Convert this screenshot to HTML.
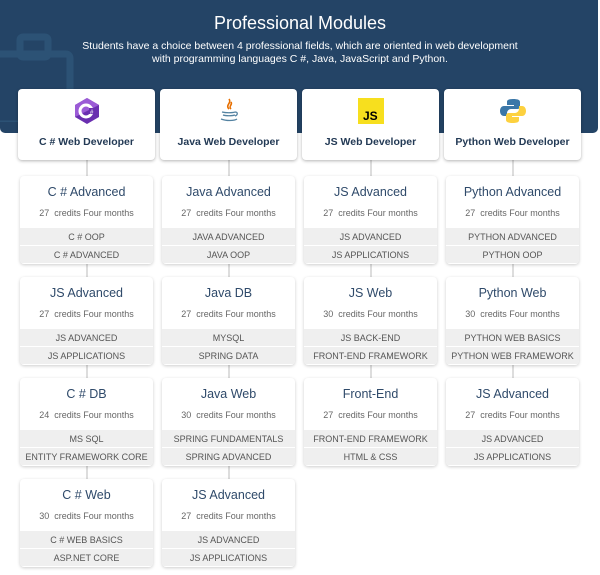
<!DOCTYPE html>
<html><head><meta charset="utf-8"><style>
*{margin:0;padding:0;box-sizing:border-box}
body{width:600px;height:575px;background:#fff;font-family:"Liberation Sans",sans-serif;position:relative;overflow:hidden}
.ban{position:absolute;left:0;top:0;width:598px;height:133px;background:#244466;border-radius:0 0 5px 5px}
.ban h1{position:absolute;top:13px;left:0;width:600px;text-align:center;color:#fff;font-weight:normal;font-size:18px}
.ban p{position:absolute;top:40px;left:0;width:600px;text-align:center;color:#fff;font-size:10.5px;line-height:13px}
.hc{position:absolute;top:89px;width:137px;height:71px;background:#fff;border-radius:4px;box-shadow:0 1px 3px rgba(0,0,0,.3);text-align:center}
.hc .t{position:absolute;top:47px;left:0;width:100%;font-size:10.5px;color:#233a55;font-weight:bold}
.hc .ic{position:absolute;top:9px;left:56px;width:26px;height:26px}
.line{position:absolute;width:2px;background:#ddd}
.c{position:absolute;width:133px;height:88px;background:#fff;border-radius:4px;box-shadow:0 1px 3px rgba(0,0,0,.2);text-align:center;overflow:hidden}
.c .n{position:absolute;top:9px;width:100%;font-size:12.5px;color:#2f4a6a}
.c .cr{position:absolute;top:32px;width:100%;font-size:9px;color:#666}
.c .g{position:absolute;left:0;width:100%;height:17px;background:#efefef;font-size:9px;color:#555;line-height:18px}
.c .g1{top:52px}.c .g2{top:70px}
</style></head><body>
<div class="ban">
<svg style="position:absolute;left:0;top:32px" width="76" height="90"><g fill="none" stroke="#2c5275" stroke-width="7"><rect x="-10" y="22" width="80" height="70" rx="4"/><rect x="20" y="5" width="28" height="20" rx="3"/></g></svg>
<h1>Professional Modules</h1>
<p>Students have a choice between 4 professional fields, which are oriented in web development<br>with programming languages C #, Java, JavaScript and Python.</p>
</div>

<div class="line" style="left:86px;top:160px;height:320px"></div>
<div class="line" style="left:228px;top:160px;height:320px"></div>
<div class="line" style="left:370px;top:160px;height:220px"></div>
<div class="line" style="left:512px;top:160px;height:220px"></div>

<div class="hc" style="left:18px"><svg class="ic" viewBox="0 0 26 26"><polygon points="13,0 25,7 25,19 13,26 1,19 1,7" fill="#6a2fb0"/><polygon points="13,0 25,7 13,13 1,19 1,7" fill="#9b5bd6"/><circle cx="12" cy="13" r="6" fill="none" stroke="#fff" stroke-width="3"/><rect x="15" y="10" width="6" height="6" fill="#6a2fb0"/><text x="16" y="16" font-size="6" fill="#fff" font-family="Liberation Sans">#</text></svg><div class="t">C # Web Developer</div></div>
<div class="hc" style="left:160px"><svg class="ic" viewBox="0 0 26 26"><path d="M13 1c3 4-4 6 0 10M15 4c2 3-3 4 0 7" stroke="#e76f00" stroke-width="1.6" fill="none"/><path d="M6 14c4 1 10 1 13 0M7 17c3 1 9 1 12 0M5 21c5 2 13 2 16 0M19 14c3 0 3 3 0 4" stroke="#5382a1" stroke-width="1.3" fill="none"/></svg><div class="t">Java Web Developer</div></div>
<div class="hc" style="left:302px"><svg class="ic" viewBox="0 0 26 26"><rect width="26" height="26" fill="#f7df1e"/><text x="5" y="22" font-size="12" font-weight="bold" fill="#000" font-family="Liberation Sans">JS</text></svg><div class="t">JS Web Developer</div></div>
<div class="hc" style="left:444px"><svg class="ic" viewBox="0 0 26 26"><path d="M13 1c-6 0-6 2-6 3v3h7v1H4c-3 0-4 3-4 5s1 5 4 5h3v-3c0-2 2-4 4-4h6c2 0 3-1 3-3V4c0-2-2-3-7-3z" fill="#3b77a8"/><path d="M13 25c6 0 6-2 6-3v-3h-7v-1h10c3 0 4-3 4-5s-1-5-4-5h-3v3c0 2-2 4-4 4H9c-2 0-3 1-3 3v4c0 2 2 3 7 3z" fill="#fdd13f"/></svg><div class="t">Python Web Developer</div></div>

<div class="c" style="left:20px;top:176px"><div class="n">C # Advanced</div><div class="cr">27&nbsp; credits Four months</div><div class="g g1">C # OOP</div><div class="g g2">C # ADVANCED</div></div>
<div class="c" style="left:162px;top:176px"><div class="n">Java Advanced</div><div class="cr">27&nbsp; credits Four months</div><div class="g g1">JAVA ADVANCED</div><div class="g g2">JAVA OOP</div></div>
<div class="c" style="left:304px;top:176px"><div class="n">JS Advanced</div><div class="cr">27&nbsp; credits Four months</div><div class="g g1">JS ADVANCED</div><div class="g g2">JS APPLICATIONS</div></div>
<div class="c" style="left:446px;top:176px"><div class="n">Python Advanced</div><div class="cr">27&nbsp; credits Four months</div><div class="g g1">PYTHON ADVANCED</div><div class="g g2">PYTHON OOP</div></div>

<div class="c" style="left:20px;top:277px"><div class="n">JS Advanced</div><div class="cr">27&nbsp; credits Four months</div><div class="g g1">JS ADVANCED</div><div class="g g2">JS APPLICATIONS</div></div>
<div class="c" style="left:162px;top:277px"><div class="n">Java DB</div><div class="cr">27&nbsp; credits Four months</div><div class="g g1">MYSQL</div><div class="g g2">SPRING DATA</div></div>
<div class="c" style="left:304px;top:277px"><div class="n">JS Web</div><div class="cr">30&nbsp; credits Four months</div><div class="g g1">JS BACK-END</div><div class="g g2">FRONT-END FRAMEWORK</div></div>
<div class="c" style="left:446px;top:277px"><div class="n">Python Web</div><div class="cr">30&nbsp; credits Four months</div><div class="g g1">PYTHON WEB BASICS</div><div class="g g2">PYTHON WEB FRAMEWORK</div></div>

<div class="c" style="left:20px;top:378px"><div class="n">C # DB</div><div class="cr">24&nbsp; credits Four months</div><div class="g g1">MS SQL</div><div class="g g2">ENTITY FRAMEWORK CORE</div></div>
<div class="c" style="left:162px;top:378px"><div class="n">Java Web</div><div class="cr">30&nbsp; credits Four months</div><div class="g g1">SPRING FUNDAMENTALS</div><div class="g g2">SPRING ADVANCED</div></div>
<div class="c" style="left:304px;top:378px"><div class="n">Front-End</div><div class="cr">27&nbsp; credits Four months</div><div class="g g1">FRONT-END FRAMEWORK</div><div class="g g2">HTML &amp; CSS</div></div>
<div class="c" style="left:446px;top:378px"><div class="n">JS Advanced</div><div class="cr">27&nbsp; credits Four months</div><div class="g g1">JS ADVANCED</div><div class="g g2">JS APPLICATIONS</div></div>

<div class="c" style="left:20px;top:479px"><div class="n">C # Web</div><div class="cr">30&nbsp; credits Four months</div><div class="g g1">C # WEB BASICS</div><div class="g g2">ASP.NET CORE</div></div>
<div class="c" style="left:162px;top:479px"><div class="n">JS Advanced</div><div class="cr">27&nbsp; credits Four months</div><div class="g g1">JS ADVANCED</div><div class="g g2">JS APPLICATIONS</div></div>
</body></html>
